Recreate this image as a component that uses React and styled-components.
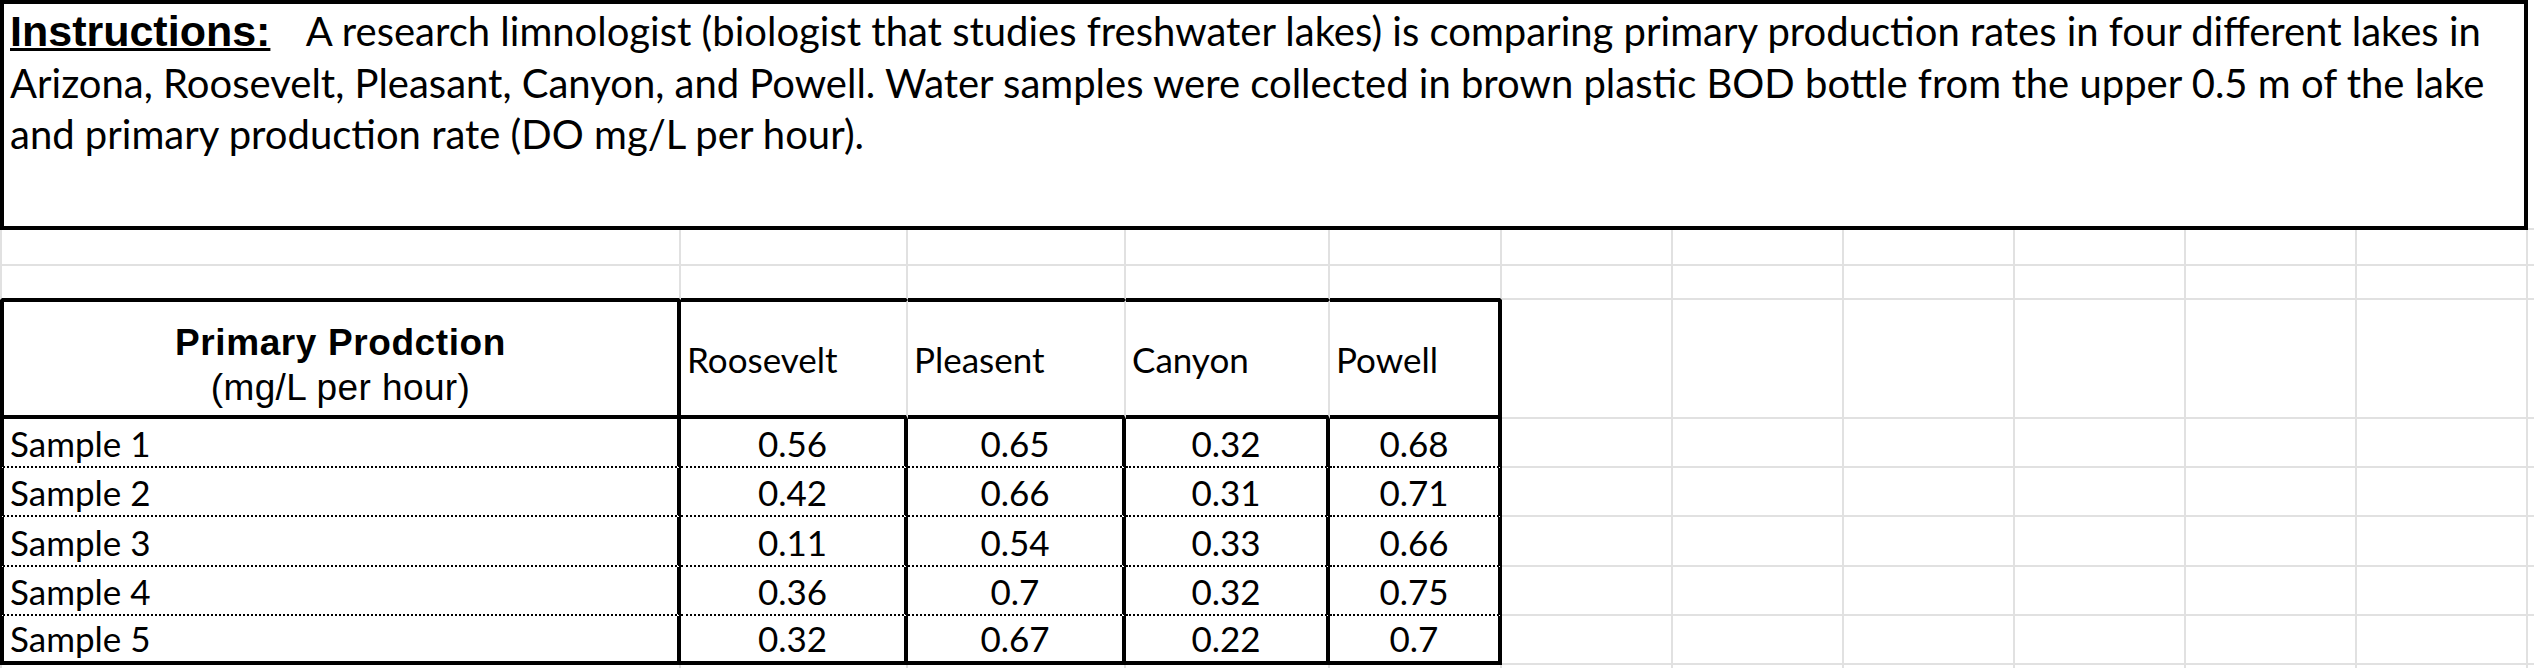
import React from 'react';
import styled, { createGlobalStyle } from 'styled-components';

const GRID = '#e1e1e1';
const INK = '#000';

const gridLine = `2px solid ${GRID}`;
const thick = `4px solid ${INK}`;
const half = `2px solid ${INK}`;
const dotted = `2px dotted ${INK}`;

const GlobalStyle = createGlobalStyle`
  html, body {
    margin: 0;
    padding: 0;
    background: #fff;
    overflow: hidden;
  }
  body {
    font-family: 'Lato', 'Liberation Sans', sans-serif;
    color: ${INK};
  }
`;

const Viewport = styled.div`
  width: 2534px;
  height: 668px;
  overflow: hidden;
`;

const Sheet = styled.div`
  display: grid;
  grid-template-columns: 681px 227px 218px 204px 172px repeat(7, 171px);
  grid-template-rows: 230px 36px 34px 119px 49px 49px 50px 49px 49px 60px;
  width: max-content;
`;

const Cell = styled.div`
  box-sizing: border-box;
  display: flex;
  align-items: ${p => p.$valign || 'flex-end'};
  justify-content: ${p => (p.$center ? 'center' : 'flex-start')};
  padding: 0 ${p => (p.$center ? 0 : 6)}px ${p => p.$padBottom || 0}px
    ${p => (p.$center ? 0 : 6)}px;
  border-top: ${p => p.$top || 'none'};
  border-left: ${p => p.$left || 'none'};
  border-right: ${p => p.$right || gridLine};
  border-bottom: ${p => p.$bottom || gridLine};
  font-size: 35px;
  line-height: 1.2;
  white-space: nowrap;
  overflow: hidden;
`;

const InstructionBox = styled.div`
  box-sizing: border-box;
  grid-column: 1 / span 11;
  border: ${thick};
  padding: 2px 0 0 6px;
  font-size: 40px;
  line-height: 51.5px;
  overflow: hidden;
`;

const Line = styled.div`
  white-space: pre;
`;

const Lead = styled.span`
  font-family: 'Liberation Sans', Arial, sans-serif;
  font-weight: 700;
  font-size: 43px;
  text-decoration: underline;
  text-decoration-thickness: 3px;
  text-underline-offset: 2px;
  margin-right: 6px;
`;

const TitleBlock = styled.div`
  width: 100%;
  padding-bottom: 5px;
  text-align: center;
  font-family: 'Liberation Sans', Arial, sans-serif;
  font-size: 37px;
  line-height: 45px;
`;

const TitleMain = styled.div`
  font-weight: 700;
  letter-spacing: 0.6px;
`;

const TitleUnit = styled.div`
  letter-spacing: 0.4px;
`;

const lakes = ['Roosevelt', 'Pleasent', 'Canyon', 'Powell'];

const samples = [
  ['Sample 1', '0.56', '0.65', '0.32', '0.68'],
  ['Sample 2', '0.42', '0.66', '0.31', '0.71'],
  ['Sample 3', '0.11', '0.54', '0.33', '0.66'],
  ['Sample 4', '0.36', '0.7', '0.32', '0.75'],
  ['Sample 5', '0.32', '0.67', '0.22', '0.7'],
];

const blanks = (row, count) =>
  Array.from({ length: count }, (_, i) => <Cell key={`${row}-b${i}`} />);

const EmptyRow = ({ row, tableBelow }) => (
  <>
    <Cell $left={gridLine} $bottom={tableBelow ? half : undefined} />
    {[0, 1, 2, 3].map(i => (
      <Cell key={`${row}-${i}`} $bottom={tableBelow ? half : undefined} />
    ))}
    {blanks(row, 7)}
  </>
);

const App = () => {
  return (
    <>
      <GlobalStyle />
      <Viewport>
        <Sheet>
          <InstructionBox>
            <Line>
              <Lead>Instructions:</Lead>
              {'   '}A research limnologist (biologist that studies freshwater lakes) is comparing primary production rates in four different lakes in
            </Line>
            <Line>
              Arizona, Roosevelt, Pleasant, Canyon, and Powell. Water samples were collected in brown plastic BOD bottle from the upper 0.5 m of the lake
            </Line>
            <Line>and primary production rate (DO mg/L per hour).</Line>
          </InstructionBox>
          <Cell />

          <EmptyRow row="r2" />
          <EmptyRow row="r3" tableBelow />

          <Cell $top={half} $left={thick} $right={thick} $bottom={thick}>
            <TitleBlock>
              <TitleMain>Primary Prodction</TitleMain>
              <TitleUnit>(mg/L per hour)</TitleUnit>
            </TitleBlock>
          </Cell>
          {lakes.map((lake, i) => (
            <Cell
              key={lake}
              $valign="center"
              $top={half}
              $bottom={thick}
              $right={i === lakes.length - 1 ? thick : undefined}
            >
              {lake}
            </Cell>
          ))}
          {blanks('r4', 7)}

          {samples.map((row, r) => {
            const edge = r === samples.length - 1 ? thick : dotted;
            return (
              <React.Fragment key={row[0]}>
                <Cell $left={thick} $right={thick} $bottom={edge} $padBottom={2}>
                  {row[0]}
                </Cell>
                {row.slice(1).map((value, c) => (
                  <Cell
                    key={`${row[0]}-${c}`}
                    $center
                    $right={thick}
                    $bottom={edge}
                    $padBottom={2}
                  >
                    {value}
                  </Cell>
                ))}
                {blanks(row[0], 7)}
              </React.Fragment>
            );
          })}

          <EmptyRow row="r10" />
        </Sheet>
      </Viewport>
    </>
  );
};

export default App;
